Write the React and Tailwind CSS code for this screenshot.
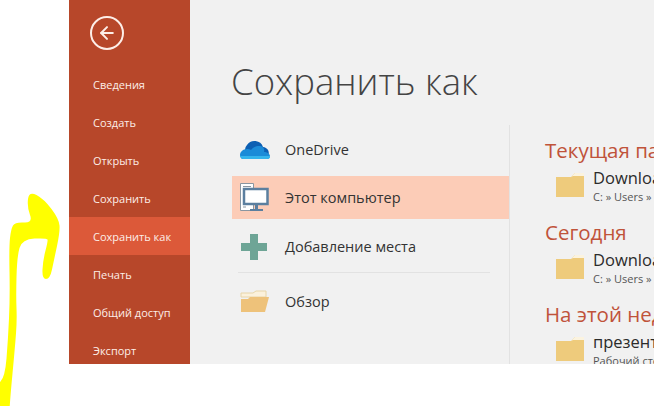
import { ArrowLeft } from "lucide-react";

const navItems = ["Сведения", "Создать", "Открыть", "Сохранить", "Сохранить как", "Печать", "Общий доступ", "Экспорт"];

// outline of the hand-drawn marker arrow, rounded off below
const arrowPoints = [
  [29, 191], [44, 199], [59, 219], [60, 232], [54, 260], [50, 279], [42, 279], [43, 260],
  [48, 241], [47, 238], [22, 239], [17, 257], [16, 297], [17, 320], [15, 347], [10, 400],
  [9, 420], [-6, 420], [-4, 386], [5, 377], [8, 340], [10, 297], [9, 247], [11, 229],
  [15, 222], [33, 223], [27, 207],
];

function smoothPath(points) {
  const mid = (a, b) => `${(a[0] + b[0]) / 2} ${(a[1] + b[1]) / 2}`;
  let d = `M${mid(points[points.length - 1], points[0])}`;
  points.forEach((p, i) => {
    d += `Q${p[0]} ${p[1]} ${mid(p, points[(i + 1) % points.length])}`;
  });
  return d + "z";
}

function FolderIcon() {
  return (
    <svg width="28" height="25" viewBox="0 0 28 25" className="shrink-0">
      <path d="M0 5h15l4-4h9v24H0z" fill="#eecb7c" />
      <path d="M15 5l4-4h9v3H17z" fill="#fbf3df" />
    </svg>
  );
}

function RecentFile({ name, path }) {
  return (
    <div className="flex h-[51px] items-start pl-[11px] gap-[9px]">
      <div className="pt-[9px]">
        <FolderIcon />
      </div>
      <div className="whitespace-nowrap pt-[5px]">
        <div className="text-[16.5px] leading-[20px] text-[#2b2b2b]">{name}</div>
        <div className="pt-[1px] text-[11px] leading-[16px] text-[#555]">{path}</div>
      </div>
    </div>
  );
}

function PlaceRow({ icon, label, active }) {
  return (
    <div className={`flex h-[43px] items-center pl-[8px] ${active ? "bg-[#fcccb7]" : ""}`}>
      <div className="flex w-[45px] shrink-0 items-center">{icon}</div>
      <span className="text-[14.5px] text-[#333]">{label}</span>
    </div>
  );
}

export default function App() {
  return (
    <div className="relative h-[406px] w-[654px] overflow-hidden bg-white font-['Open_Sans','Noto_Sans',sans-serif]">
      <div className="ml-[69px] flex h-[364px]">
        {/* Sidebar */}
        <aside className="w-[121px] shrink-0 overflow-hidden bg-[#b7472a] text-white">
          <div className="flex h-[65px] items-start pl-[21px] pt-[16px]">
            <div className="flex h-[34px] w-[34px] items-center justify-center rounded-full border-2 border-[#fdeee8]">
              <ArrowLeft size={20} strokeWidth={2.4} color="#fdeee8" />
            </div>
          </div>
          {navItems.map((item) => (
            <div
              key={item}
              className={`flex h-[38px] items-center pl-[24px] pt-[2px] text-[11px] whitespace-nowrap text-[#fdeee8] ${item === "Сохранить как" ? "bg-[#dc5939]" : ""}`}
            >
              {item}
            </div>
          ))}
        </aside>

        {/* Main */}
        <main className="min-w-0 flex-1 overflow-hidden bg-[#f1f1f1]">
          <h1 className="h-[125px] pl-[41px] pt-[51px] text-[36.500px] leading-[60px] font-light text-[#444]">
            Сохранить как
          </h1>
          <div className="flex h-[239px]">
            <div className="ml-[42px] w-[277px] shrink-0 pt-[3px]">
              <PlaceRow
                label="OneDrive"
                icon={
                  <svg width="30" height="20" viewBox="0 0 30 20">
                    <path d="M7 15a7 7 0 0 1 0-10 9 9 0 0 1 16 2 6 6 0 0 1 5 9z" fill="#0c5fb3" />
                    <path d="M3 19c-2 0-3-2-3-4 0-3 3-6 7-6 1 0 3 0 4 1 2-3 5-4 8-4 4 0 6 3 5 6 3 0 6 2 6 4 0 2-1 3-3 3z" fill="#1b8bd8" />
                    <path d="M3 19c-1 0-2-1-3-3h30c0 2-1 3-3 3z" fill="#35b4ec" />
                  </svg>
                }
              />
              <div className="pt-[5px]">
                <PlaceRow
                  active
                  label="Этот компьютер"
                  icon={
                    <svg width="29" height="29" viewBox="0 0 29 29">
                      <path d="M.5.5h13v27H.5z" fill="#fff" stroke="#8a96a1" />
                      <path d="M3 3.500h8M3 6.500h3M3 24h3" stroke="#8a96a1" />
                      <rect x="4" y="6" width="23.500" height="15" fill="#fff" stroke="#5b7f9f" strokeWidth="2.500" />
                      <path d="M15 22h3v4h-3zM10 26h13v2H10z" fill="#5b7f9f" />
                    </svg>
                  }
                />
              </div>
              <div className="pt-[6px]">
                <PlaceRow
                  label="Добавление места"
                  icon={
                    <svg width="28" height="28" viewBox="0 0 28 28">
                      <path d="M10 1h8v9h9v8h-9v9h-8v-9H1v-8h9z" fill="#6ea596" />
                    </svg>
                  }
                />
              </div>
              <div className="mx-[6px] mt-[4px] h-px w-[252px] bg-[#e2e2e2]" />
              <div className="pt-[7px]">
                <PlaceRow
                  label="Обзор"
                  icon={
                    <svg width="30" height="23" viewBox="0 0 30 23">
                      <path d="M1 3h12l3-2h10v6H1z" fill="#fbf1dc" stroke="#e8d5a8" />
                      <path d="M1 22V9h7l2-2h19l-4 15z" fill="#eec27a" />
                    </svg>
                  }
                />
              </div>
            </div>

            <div className="w-px shrink-0 bg-[#e2e2e2]" />

            <div className="min-w-0 flex-1 pl-[35px] pt-[12px] whitespace-nowrap">
              <div className="text-[20.5px] leading-[26px] text-[#c0533a]">Текущая папка</div>
              <RecentFile name="Downloads" path="C: » Users » User » Downloads" />
              <div className="pt-[5px] text-[20.5px] leading-[26px] text-[#c0533a]">Сегодня</div>
              <RecentFile name="Downloads" path="C: » Users » User » Downloads" />
              <div className="pt-[5px] text-[20.5px] leading-[26px] text-[#c0533a]">На этой неделе</div>
              <RecentFile name="презентации" path="Рабочий стол" />
            </div>
          </div>
        </main>
      </div>

      {/* Yellow marker arrow drawn over the screenshot */}
      <svg className="absolute left-0 top-0" width="70" height="406" viewBox="0 0 70 406">
        <path d={smoothPath(arrowPoints)} fill="#ffff00" />
      </svg>
    </div>
  );
}
